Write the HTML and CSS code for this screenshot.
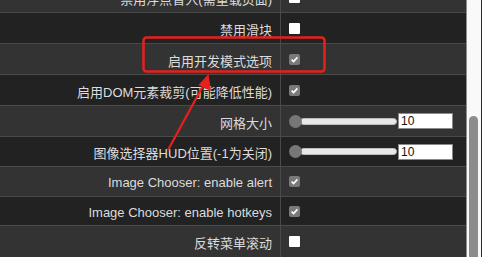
FILE: index.html
```html
<!DOCTYPE html>
<html>
<head>
<meta charset="utf-8">
<link rel="stylesheet" href="styles.css">
</head>
<body>
<div class="page">
  <div class="viewport">
    <div class="settings">
      <div class="row"><div class="label">禁用浮点音入(需重载页面)</div><div class="value"><span class="cb"></span></div></div>
      <div class="row"><div class="label">禁用滑块</div><div class="value"><span class="cb"></span></div></div>
      <div class="row"><div class="label">启用开发模式选项</div><div class="value"><span class="cb on"><svg viewBox="0 0 11 11"><path d="M2.6 5.6 L4.6 7.6 L8.4 3.4" /></svg></span></div></div>
      <div class="row"><div class="label">启用DOM元素裁剪(可能降低性能)</div><div class="value"><span class="cb on"><svg viewBox="0 0 11 11"><path d="M2.6 5.6 L4.6 7.6 L8.4 3.4" /></svg></span></div></div>
      <div class="row"><div class="label">网格大小</div><div class="value"><span class="slider"><span class="thumb"></span><span class="track"></span></span><span class="num">10</span></div></div>
      <div class="row"><div class="label">图像选择器HUD位置(-1为关闭)</div><div class="value"><span class="slider"><span class="thumb"></span><span class="track"></span></span><span class="num">10</span></div></div>
      <div class="row"><div class="label">Image Chooser: enable alert</div><div class="value"><span class="cb on"><svg viewBox="0 0 11 11"><path d="M2.6 5.6 L4.6 7.6 L8.4 3.4" /></svg></span></div></div>
      <div class="row"><div class="label">Image Chooser: enable hotkeys</div><div class="value"><span class="cb on"><svg viewBox="0 0 11 11"><path d="M2.6 5.6 L4.6 7.6 L8.4 3.4" /></svg></span></div></div>
      <div class="row"><div class="label">反转菜单滚动</div><div class="value"><span class="cb"></span></div></div>
    </div>
  </div>
  <div class="scrollbar"><div class="sb-thumb"></div></div>
</div>
<svg class="annot" width="482" height="257" viewBox="0 0 482 257">
  <rect x="143.5" y="37.5" width="181" height="34" rx="3" ry="3" fill="none" stroke="#e8201c" stroke-width="2.5"/>
  <line x1="168" y1="150" x2="204" y2="84" stroke="#e8201c" stroke-width="2.2"/>
  <polygon points="208.5,74 211,91 198.5,85" fill="#e8201c"/>
</svg>
</body>
</html>
```
FILE: styles.css
```css
html, body {
  margin: 0;
  padding: 0;
  background: #222222;
}
body {
  width: 482px;
  height: 257px;
  overflow: hidden;
  position: relative;
  font-family: "Liberation Sans", Arial, "Noto Sans CJK SC", sans-serif;
  font-size: 13px;
  color: #dcdcdc;
}
.page {
  display: flex;
  width: 482px;
  height: 257px;
}
.viewport {
  width: 466px;
  height: 257px;
  overflow: hidden;
}
.settings {
  margin-top: -18px;
}
.row {
  display: flex;
  height: 31px;
  box-sizing: border-box;
  border-bottom: 1px solid #4a4a4a;
  background: #333333;
}
.row:nth-child(even) {
  background: #222222;
}
.row:nth-child(6), .row:nth-child(7) {
  height: 30px;
}
.row:nth-child(8) {
  height: 29px;
}
.row:nth-child(9) {
  height: 32px;
}
.label {
  width: 280px;
  flex: none;
  box-sizing: border-box;
  padding-right: 8px;
  display: flex;
  align-items: center;
  justify-content: flex-end;
  padding-top: 2px;
  white-space: nowrap;
}
.value {
  flex: 1;
  border-left: 1px solid #4a4a4a;
  display: flex;
  align-items: center;
  padding-left: 8px;
}
.cb {
  width: 11px;
  height: 11px;
  background: #ffffff;
  border-radius: 1px;
  display: block;
}
.cb.on {
  background: #7a7a7a;
  border-radius: 2px;
}
.cb svg {
  display: block;
  width: 11px;
  height: 11px;
}
.cb svg path {
  fill: none;
  stroke: #ffffff;
  stroke-width: 1.6;
}
.slider {
  display: flex;
  align-items: center;
  width: 108px;
  height: 13px;
  position: relative;
}
.thumb {
  width: 13px;
  height: 13px;
  border-radius: 50%;
  background: #777777;
  flex: none;
  position: relative;
  z-index: 1;
}
.track {
  flex: 1;
  height: 7px;
  box-sizing: border-box;
  background: #e8e8e8;
  border: 1px solid #bdbdbd;
  border-radius: 4px;
  margin-left: -2px;
}
.num {
  margin-left: 1px;
  width: 55px;
  height: 16px;
  box-sizing: border-box;
  background: #ffffff;
  border: 1px solid #8a8a8a;
  color: #111111;
  font-size: 12px;
  line-height: 14px;
  padding-left: 2px;
}
.scrollbar {
  width: 16px;
  height: 257px;
  box-sizing: border-box;
  background: #f9f9f9;
  border-left: 1px solid #8f8f8f;
  border-right: 1px solid #2a2a2a;
  padding-top: 116px;
  padding-left: 2px;
}
.sb-thumb {
  width: 9px;
  height: 141px;
  background: #8c8c8c;
  border-radius: 5px 5px 0 0;
}
.annot {
  position: absolute;
  left: 0;
  top: 0;
  pointer-events: none;
}
```
